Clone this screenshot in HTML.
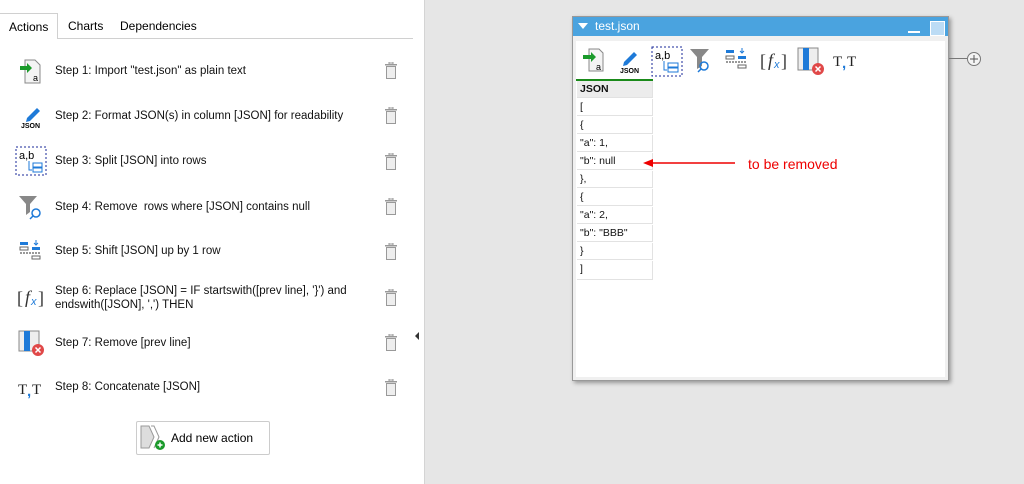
<!DOCTYPE html><html><head><style>
body{margin:0;width:1024px;height:484px;overflow:hidden;font-family:"Liberation Sans",sans-serif;background:#fff;position:relative}
.a{position:absolute}
.step{position:absolute;left:55px;font-size:11.5px;color:#111;line-height:14px}
.ic{position:absolute;left:17px;width:28px;height:28px}
.tr{position:absolute;left:384px;width:14px;height:17px}
.row{position:absolute;left:577px;width:76px;height:17px;border-bottom:1px solid #e2e2e2;border-right:1px solid #e2e2e2;font-size:10.5px;line-height:17px;padding-left:3px;box-sizing:border-box;color:#111}
</style></head><body>
<div class="a" style="left:424px;top:0;width:600px;height:484px;background:#e6e6e6;border-left:1px solid #d4d4d4;box-sizing:border-box"></div>
<div class="a" style="left:415px;top:332px;width:0;height:0;border-top:4px solid transparent;border-bottom:4px solid transparent;border-right:4px solid #333"></div>
<!-- tabs -->
<div class="a" style="left:0;top:38px;width:413px;height:1px;background:#d0d0d0"></div>
<div class="a" style="left:0;top:13px;width:58px;height:26px;background:#fff;border:1px solid #d0d0d0;border-left:none;border-bottom:none;box-sizing:border-box;font-size:12px;padding:6px 0 0 9px">Actions</div>
<div class="a" style="left:68px;top:19px;font-size:12px">Charts</div>
<div class="a" style="left:120px;top:19px;font-size:12px">Dependencies</div>

<svg class="ic" style="top:57px" viewBox="0 0 28 28"><path d="M8 3h10l5 5v18H8z" fill="#f4f4f4" stroke="#888"/><path d="M3 9h7V6l5 5-5 5v-3H3z" fill="#1a9a2a"/><text x="16" y="24" font-size="9" font-family="Liberation Sans">a</text></svg>
<div class="step" style="top:64px">Step 1: Import "test.json" as plain text</div>
<svg class="ic" style="top:102px" viewBox="0 0 28 28"><path d="M10 16l10-10 3 3-10 10-4 1z" fill="#1e7ad8"/><text x="4" y="26" font-size="7" font-family="Liberation Sans" font-weight="bold">JSON</text></svg>
<div class="step" style="top:109px">Step 2: Format JSON(s) in column [JSON] for readability</div>
<svg class="ic" style="top:146px;left:15px;width:32px;height:30px" viewBox="0 0 32 30"><rect x="1" y="1" width="30" height="28" fill="none" stroke="#1a2a9a" stroke-dasharray="2 2"/><text x="4" y="13" font-size="11" font-family="Liberation Sans">a,b</text><rect x="18" y="17" width="9" height="4" fill="none" stroke="#1e7ad8"/><rect x="18" y="22" width="9" height="4" fill="none" stroke="#1e7ad8"/><path d="M14 15v9h3" stroke="#1e7ad8" fill="none"/></svg>
<div class="step" style="top:154px">Step 3: Split [JSON] into rows</div>
<svg class="ic" style="top:193px" viewBox="0 0 28 28"><path d="M2 3h18l-7 8v8l-4 3V11z" fill="#888"/><circle cx="19" cy="20" r="4" fill="none" stroke="#1e7ad8" stroke-width="1.5"/><path d="M16 23l-3 3" stroke="#1e7ad8" stroke-width="1.5"/></svg>
<div class="step" style="top:200px">Step 4: Remove&nbsp; rows where [JSON] contains null</div>
<svg class="ic" style="top:237px" viewBox="0 0 28 28"><rect x="3" y="5" width="8" height="3" fill="#1e7ad8"/><rect x="3" y="10" width="8" height="3" fill="none" stroke="#666"/><rect x="15" y="10" width="8" height="3" fill="#1e7ad8"/><path d="M19 3v5M17 6l2 2 2-2" stroke="#1e7ad8" fill="none"/><path d="M3 16h20" stroke="#333" stroke-dasharray="2 1"/><rect x="15" y="19" width="8" height="3" fill="none" stroke="#666"/></svg>
<div class="step" style="top:244px">Step 5: Shift [JSON] up by 1 row</div>
<svg class="ic" style="top:283px" viewBox="0 0 28 28"><text x="0" y="21" font-size="18" font-family="Liberation Serif" fill="#333">[</text><text x="8" y="20" font-size="18" font-style="italic" font-family="Liberation Serif" fill="#333">f</text><text x="14" y="22" font-size="11" font-style="italic" font-family="Liberation Sans" fill="#1e7ad8">x</text><text x="21" y="21" font-size="18" font-family="Liberation Serif" fill="#333">]</text></svg>
<div class="step" style="top:284px">Step 6: Replace [JSON] = IF startswith([prev line], '}') and<br>endswith([JSON], ',') THEN</div>
<svg class="ic" style="top:329px" viewBox="0 0 28 28"><rect x="2" y="2" width="20" height="20" fill="#eee" stroke="#888"/><rect x="7" y="2" width="6" height="20" fill="#1e7ad8"/><circle cx="21" cy="21" r="6" fill="#e04848"/><path d="M18.5 18.5l5 5M23.5 18.5l-5 5" stroke="#fff" stroke-width="1.5"/></svg>
<div class="step" style="top:336px">Step 7: Remove [prev line]</div>
<svg class="ic" style="top:374px" viewBox="0 0 28 28"><text x="1" y="20" font-size="15" font-family="Liberation Serif" fill="#222">T</text><text x="10" y="22" font-size="15" font-weight="bold" font-family="Liberation Sans" fill="#1e7ad8">,</text><text x="15" y="20" font-size="15" font-family="Liberation Serif" fill="#222">T</text></svg>
<div class="step" style="top:380px">Step 8: Concatenate [JSON]</div>

<svg width="0" height="0" style="position:absolute"><defs><g id="t"><rect x="1" y="2" width="12" height="1.5" fill="#999"/><rect x="5" y="0" width="4" height="2" fill="none" stroke="#999"/><path d="M2.5 4.5h9v12h-9z" fill="#eee" stroke="#999"/></g></defs></svg>
<svg class="tr" style="top:62px"><use href="#t"/></svg>
<svg class="tr" style="top:107px"><use href="#t"/></svg>
<svg class="tr" style="top:153px"><use href="#t"/></svg>
<svg class="tr" style="top:198px"><use href="#t"/></svg>
<svg class="tr" style="top:243px"><use href="#t"/></svg>
<svg class="tr" style="top:289px"><use href="#t"/></svg>
<svg class="tr" style="top:334px"><use href="#t"/></svg>
<svg class="tr" style="top:379px"><use href="#t"/></svg>

<div class="a" style="left:136px;top:421px;width:134px;height:34px;border:1px solid #ccc;border-radius:2px;box-sizing:border-box;background:#fff"></div>
<svg class="a" style="left:139px;top:423px" width="30" height="30" viewBox="0 0 30 30"><path d="M2 3h8l5 11-5 11H2z" fill="#ddd" stroke="#999"/><path d="M12 3h3l5 11-5 11" fill="none" stroke="#999"/><circle cx="21" cy="22" r="5" fill="#1a9a2a"/><path d="M21 19.5v5M18.5 22h5" stroke="#fff" stroke-width="1.5"/></svg>
<div class="a" style="left:171px;top:431px;font-size:12px">Add new action</div>

<!-- window -->
<div class="a" style="left:572px;top:16px;width:377px;height:365px;background:#f0f0f0;border:1px solid #999;box-sizing:border-box;box-shadow:2px 2px 4px rgba(0,0,0,.35)"></div>
<div class="a" style="left:573px;top:17px;width:375px;height:19px;background:#4aa3df"></div>
<div class="a" style="left:578px;top:23px;width:0;height:0;border-left:5px solid transparent;border-right:5px solid transparent;border-top:6px solid #fff"></div>
<div class="a" style="left:595px;top:19px;font-size:12px;color:#fff">test.json</div>
<div class="a" style="left:908px;top:31px;width:12px;height:2px;background:#fff"></div>
<div class="a" style="left:930px;top:21px;width:13px;height:13px;background:#bcdcf5;border:1px solid #fff"></div>
<div class="a" style="left:576px;top:41px;width:369px;height:336px;background:#fff"></div>
<svg class="a" style="left:580px;top:46px" width="290" height="32" viewBox="0 0 290 32">
<path d="M9 3h10l4 4v18H9z" fill="#f4f4f4" stroke="#888"/><path d="M3 9h8V6l5 5-5 5v-3H3z" fill="#1a9a2a"/><text x="16" y="24" font-size="9" font-family="Liberation Sans">a</text>
<path d="M44 16l10-10 3 3-10 10-4 1z" fill="#1e7ad8"/><text x="40" y="27" font-size="7" font-weight="bold" font-family="Liberation Sans">JSON</text>
<rect x="72" y="1" width="30" height="29" fill="none" stroke="#1a2a9a" stroke-dasharray="2 2"/><text x="75" y="13" font-size="11" font-family="Liberation Sans">a,b</text><rect x="88" y="17" width="10" height="4" fill="none" stroke="#1e7ad8"/><rect x="88" y="22" width="10" height="4" fill="none" stroke="#1e7ad8"/><path d="M84 15v9h3" stroke="#1e7ad8" fill="none"/>
<path d="M110 3h19l-7 8v9l-5 3V11z" fill="#888"/><circle cx="124" cy="20" r="4" fill="none" stroke="#1e7ad8" stroke-width="1.5"/><path d="M121 23l-3 3" stroke="#1e7ad8" stroke-width="1.5"/>
<rect x="146" y="4" width="8" height="3" fill="#1e7ad8"/><rect x="146" y="10" width="8" height="3" fill="none" stroke="#666"/><rect x="158" y="10" width="8" height="3" fill="#1e7ad8"/><path d="M162 2v5M160 5l2 2 2-2" stroke="#1e7ad8" fill="none"/><path d="M146 16h20" stroke="#333" stroke-dasharray="2 1"/><rect x="158" y="19" width="8" height="3" fill="none" stroke="#666"/>
<text x="180" y="21" font-size="18" font-family="Liberation Serif" fill="#333">[</text><text x="188" y="20" font-size="18" font-style="italic" font-family="Liberation Serif" fill="#333">f</text><text x="194" y="22" font-size="11" font-style="italic" font-family="Liberation Sans" fill="#1e7ad8">x</text><text x="201" y="21" font-size="18" font-family="Liberation Serif" fill="#333">]</text>
<rect x="218" y="2" width="20" height="22" fill="#eee" stroke="#888"/><rect x="223" y="2" width="6" height="22" fill="#1e7ad8"/><circle cx="238" cy="23" r="6" fill="#e04848"/><path d="M235.5 20.5l5 5M240.5 20.5l-5 5" stroke="#fff" stroke-width="1.5"/>
<text x="253" y="20" font-size="15" font-family="Liberation Serif" fill="#222">T</text><text x="262" y="22" font-size="15" font-weight="bold" font-family="Liberation Sans" fill="#1e7ad8">,</text><text x="267" y="20" font-size="15" font-family="Liberation Serif" fill="#222">T</text>
</svg>
<div class="a" style="left:576px;top:79px;width:77px;height:2px;background:#1a8a1a"></div>
<div class="row" style="top:81px;background:#ececec;font-weight:bold">JSON</div>
<div class="row" style="top:99px">[</div>
<div class="row" style="top:117px">{</div>
<div class="row" style="top:135px">"a": 1,</div>
<div class="row" style="top:153px">"b": null</div>
<div class="row" style="top:171px">},</div>
<div class="row" style="top:189px">{</div>
<div class="row" style="top:207px">"a": 2,</div>
<div class="row" style="top:225px">"b": "BBB"</div>
<div class="row" style="top:243px">}</div>
<div class="row" style="top:261px;height:19px">]</div>
<svg class="a" style="left:640px;top:156px" width="100" height="14"><path d="M12 7H95" stroke="#e00" stroke-width="1.5"/><path d="M3 7l10-4v8z" fill="#e00"/></svg>
<div class="a" style="left:748px;top:156px;font-size:14px;color:#e00">to be removed</div>
<div class="a" style="left:949px;top:58px;width:18px;height:1px;background:#777"></div>
<svg class="a" style="left:966px;top:51px" width="16" height="16"><circle cx="8" cy="8" r="6.5" fill="#f4f4f4" stroke="#777"/><path d="M8 4v8M4 8h8" stroke="#555"/></svg>
</body></html>
